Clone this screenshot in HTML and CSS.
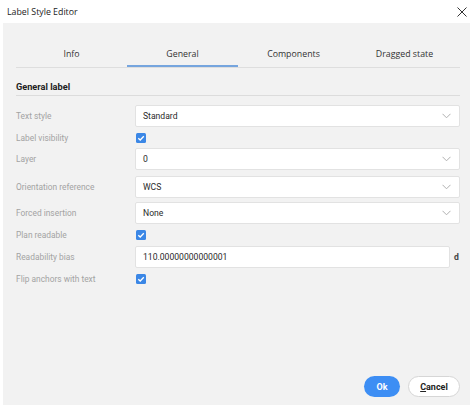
FILE: index.html
```html
<!DOCTYPE html>
<html>
<head>
<meta charset="utf-8">
<link rel="stylesheet" href="styles.css">
</head>
<body>
<div class="window">
  <div class="titlebar">
    <span class="title">Label Style Editor</span>
    <svg class="close" width="10" height="10" viewBox="0 0 10 10"><path d="M0.5 0.5 L9.5 9.5 M9.5 0.5 L0.5 9.5" stroke="#333" stroke-width="1" fill="none"/></svg>
  </div>
  <div class="panel">
    <div class="tabs">
      <div class="tab">Info</div>
      <div class="tab active">General</div>
      <div class="tab">Components</div>
      <div class="tab">Dragged state</div>
    </div>
    <div class="section">General label</div>
    <div class="rows">
      <div class="row field">
        <div class="label">Text style</div>
        <div class="box select"><span>Standard</span><svg class="chev" width="9" height="6" viewBox="0 0 9 6"><path d="M0.5 0.8 L4.5 4.8 L8.5 0.8" stroke="#b0b0b0" stroke-width="1" fill="none"/></svg></div>
      </div>
      <div class="row check">
        <div class="label">Label visibility</div>
        <div class="cb"><svg width="10" height="10" viewBox="0 0 10 10"><rect width="10" height="10" rx="1.5" fill="#3b87e6"/><path d="M2.3 5.2 L4.2 7 L7.8 3.2" stroke="#fff" stroke-width="1.3" fill="none"/></svg></div>
      </div>
      <div class="row field">
        <div class="label">Layer</div>
        <div class="box select"><span>0</span><svg class="chev" width="9" height="6" viewBox="0 0 9 6"><path d="M0.5 0.8 L4.5 4.8 L8.5 0.8" stroke="#b0b0b0" stroke-width="1" fill="none"/></svg></div>
      </div>
      <div class="row field gap6">
        <div class="label">Orientation reference</div>
        <div class="box select"><span>WCS</span><svg class="chev" width="9" height="6" viewBox="0 0 9 6"><path d="M0.5 0.8 L4.5 4.8 L8.5 0.8" stroke="#b0b0b0" stroke-width="1" fill="none"/></svg></div>
      </div>
      <div class="row field gap4">
        <div class="label">Forced insertion</div>
        <div class="box select"><span>None</span><svg class="chev" width="9" height="6" viewBox="0 0 9 6"><path d="M0.5 0.8 L4.5 4.8 L8.5 0.8" stroke="#b0b0b0" stroke-width="1" fill="none"/></svg></div>
      </div>
      <div class="row check tall">
        <div class="label">Plan readable</div>
        <div class="cb"><svg width="10" height="10" viewBox="0 0 10 10"><rect width="10" height="10" rx="1.5" fill="#3b87e6"/><path d="M2.3 5.2 L4.2 7 L7.8 3.2" stroke="#fff" stroke-width="1.3" fill="none"/></svg></div>
      </div>
      <div class="row field">
        <div class="label">Readability bias</div>
        <div class="unitwrap">
          <div class="box input"><span>110.00000000000001</span></div>
          <span class="unit">d</span>
        </div>
      </div>
      <div class="row check">
        <div class="label">Flip anchors with text</div>
        <div class="cb"><svg width="10" height="10" viewBox="0 0 10 10"><rect width="10" height="10" rx="1.5" fill="#3b87e6"/><path d="M2.3 5.2 L4.2 7 L7.8 3.2" stroke="#fff" stroke-width="1.3" fill="none"/></svg></div>
      </div>
    </div>
    <div class="spacer"></div>
    <div class="buttons">
      <button class="btn ok">Ok</button>
      <button class="btn cancel"><u>C</u>ancel</button>
    </div>
  </div>
</div>
</body>
</html>
```
FILE: styles.css
```css
html, body {
  margin: 0;
  padding: 0;
  background: #ffffff;
}
.window {
  width: 474px;
  height: 408px;
  display: flex;
  flex-direction: column;
  background: #ffffff;
  overflow: hidden;
}
.titlebar {
  height: 23px;
  display: flex;
  align-items: center;
  justify-content: space-between;
  padding: 0 7px 0 7px;
  box-sizing: border-box;
}
.title {
  font-family: "Open Sans", "Noto Sans", sans-serif;
  font-size: 8.8px;
  color: #222;
}
.close {
  display: block;
}
.panel {
  margin: 0 4px 3px 3px;
  height: 382px;
  background: #f2f2f2;
  display: flex;
  flex-direction: column;
  padding: 0 10px 0 13px;
}
.tabs {
  display: flex;
  padding-top: 23px;
  border-bottom: 1px solid #dedede;
}
.tab {
  flex: 1;
  text-align: center;
  font-family: "Open Sans", "Noto Sans", sans-serif;
  font-size: 8.8px;
  color: #333;
  height: 21px;
  line-height: 16px;
  box-sizing: border-box;
}
.tab.active {
  border-bottom: 2px solid #76a5de;
  margin-bottom: -1px;
}
.section {
  margin-top: 12px;
  font-family: Roboto, sans-serif;
  font-weight: bold;
  font-size: 9.2px;
  color: #222;
  height: 14px;
  line-height: 14px;
  padding-bottom: 1px;
  border-bottom: 1px solid #dcdcdc;
}
.rows {
  display: flex;
  flex-direction: column;
  margin-top: 9px;
}
.row {
  display: flex;
  align-items: center;
}
.row.field { height: 22px; }
.row.check { height: 21px; }
.row.check.tall { height: 22px; }
.row.gap6 { margin-top: 6px; }
.row.gap4 { margin-top: 4px; }
.label {
  width: 119px;
  flex: none;
  font-family: Roboto, sans-serif;
  font-size: 8.4px;
  color: #a3a3a3;
}
.box {
  height: 22px;
  box-sizing: border-box;
  background: #ffffff;
  border: 1px solid #e2e2e2;
  border-radius: 2px;
  display: flex;
  align-items: center;
  padding: 0 8px 0 7px;
  font-family: Roboto, sans-serif;
  font-size: 8.6px;
  color: #2a2a2a;
}
.select {
  flex: 1;
  justify-content: space-between;
}
.chev { display: block; }
.unitwrap {
  flex: 1;
  display: flex;
  align-items: center;
}
.input { flex: 1; }
.unit {
  width: 6px;
  padding-left: 4px;
  font-family: Roboto, sans-serif;
  font-weight: bold;
  font-size: 8.6px;
  color: #444;
}
.cb {
  padding-left: 1px;
  display: flex;
}
.cb svg { display: block; }
.spacer { flex: 1; }
.buttons {
  display: flex;
  justify-content: flex-end;
  gap: 8px;
  padding-bottom: 8px;
}
.btn {
  height: 21px;
  border-radius: 11px;
  font-family: Roboto, sans-serif;
  font-weight: bold;
  font-size: 9px;
  padding: 0;
  cursor: default;
}
.ok {
  width: 36px;
  background: #3d8ef4;
  border: none;
  color: #ffffff;
}
.cancel {
  width: 52px;
  background: #ffffff;
  border: 1px solid #d6d6d6;
  color: #222;
}
```
